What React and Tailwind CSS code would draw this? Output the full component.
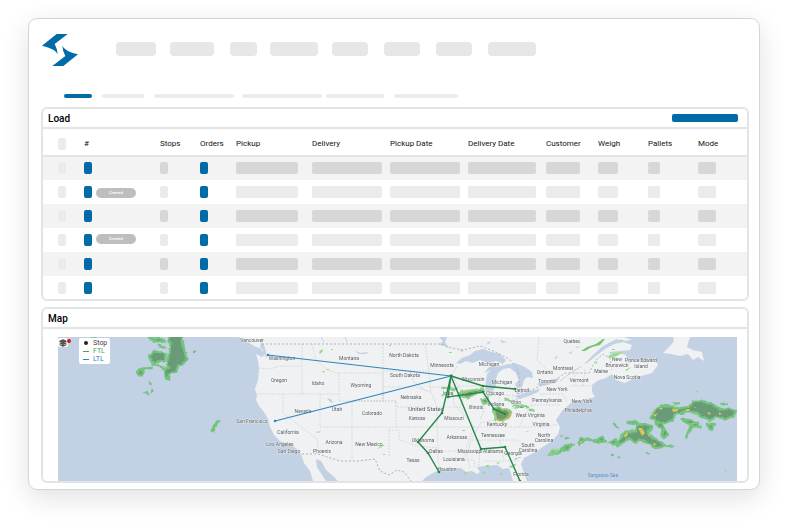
import { Layers } from 'lucide-react';

const NAV_ITEMS = ['w-10', 'w-11 ml-3.5', 'w-[27px] ml-4', 'w-12 ml-[13px]', 'w-9 ml-3.5', 'w-9 ml-4', 'w-9 ml-4', 'w-12 ml-4'];

const TABS = [
  'w-7 bg-[#006ba6]',
  'w-[42px] ml-2.5 bg-[#ebebeb]',
  'w-20 ml-2.5 bg-[#ebebeb]',
  'w-20 ml-2 bg-[#ebebeb]',
  'w-[58px] ml-1 bg-[#ebebeb]',
  'w-16 ml-2.5 bg-[#ebebeb]',
];

const COLUMNS = [
  { label: 'Stops', col: 'w-10', bar: 'w-2' },
  { label: 'Orders', col: 'w-9', bar: 'w-2', blue: true },
  { label: 'Pickup', col: 'w-[76px]', bar: 'w-[62px]' },
  { label: 'Delivery', col: 'w-[78px]', bar: 'w-[70px]' },
  { label: 'Pickup Date', col: 'w-[78px]', bar: 'w-[70px]' },
  { label: 'Delivery Date', col: 'w-[78px]', bar: 'w-[68px]' },
  { label: 'Customer', col: 'w-[52px]', bar: 'w-[34px]' },
  { label: 'Weigh', col: 'w-[50px]', bar: 'w-5' },
  { label: 'Pallets', col: 'w-[50px]', bar: 'w-3' },
  { label: 'Mode', col: '', bar: 'w-[18px]' },
];

const ROWS = [
  { id: 1 },
  { id: 2, status: 'Created', align: 'items-end' },
  { id: 3 },
  { id: 4, status: 'Created', align: 'items-start' },
  { id: 5 },
  { id: 6 },
];

const PLACES = [
  ['Vancouver', 252, 340], ['Washington', 282, 358], ['Montana', 349, 358], ['Oregon', 279, 380],
  ['Idaho', 318, 383], ['Wyoming', 361, 385], ['Nevada', 303, 411], ['Utah', 337, 409],
  ['Colorado', 372, 413], ['San Francisco', 252, 421], ['California', 288, 432], ['Arizona', 334, 442],
  ['Los Angeles', 280, 444], ['San Diego', 289, 451], ['Phoenix', 322, 451], ['New Mexico', 369, 444],
  ['North Dakota', 404, 355], ['Minnesota', 442, 365], ['Michigan', 489, 364], ['Michigan', 502, 382],
  ['South Dakota', 405, 375], ['Wisconsin', 473, 379], ['Iowa', 448, 393], ['Nebraska', 411, 397],
  ['Chicago', 495, 393], ['Detroit', 522, 390], ['Ontario', 545, 372], ['Toronto', 547, 381],
  ['Illinois', 476, 407], ['Indiana', 496, 404], ['Ohio', 516, 402], ['Pennsylvania', 547, 400],
  ['West Virginia', 530, 415], ['Kansas', 417, 418], ['Missouri', 454, 418], ['Kentucky', 497, 424],
  ['Virginia', 541, 424], ['Oklahoma', 423, 440], ['Arkansas', 457, 437], ['Tennessee', 493, 435],
  ['North', 544, 435], ['Carolina', 544, 440], ['South', 528, 445], ['Carolina', 528, 450],
  ['Mississippi', 470, 451], ['Alabama', 493, 451], ['Georgia', 513, 453], ['Dallas', 436, 451],
  ['Texas', 413, 460], ['Louisiana', 454, 459], ['Houston', 447, 469], ['Florida', 521, 474],
  ['Quebec', 572, 341], ['Montreal', 563, 368], ['New', 617, 359], ['Brunswick', 617, 365],
  ['Prince Edward', 641, 360], ['Island', 641, 366], ['Maine', 601, 371], ['Vermont', 579, 380],
  ['Nova Scotia', 627, 377], ['New York', 557, 389], ['New York', 582, 401], ['Philadelphia', 578, 410],
];

const FTL_ROUTES = [
  [[451, 376], [483, 386], [515, 389]],
  [[451, 376], [448, 397], [483, 392], [494, 409], [505, 414]],
  [[451, 376], [442, 413], [418, 442], [428, 453], [439, 472]],
  [[451, 376], [481, 449], [505, 447], [520, 481]],
];

const LTL_ROUTES = [
  [[268, 355], [451, 376]],
  [[275, 421], [451, 376]],
];

function Logo() {
  return (
    <svg viewBox="0 0 108 96" className="w-9 h-8 shrink-0" fill="#006ba6" role="img" aria-label="Logo">
      <path d="M44 0H77L38 30Q46 44 47 61Q41 45 0 35Z" />
      <path d="M64 96H31L70 66Q62 52 61 35Q67 51 108 61Z" />
    </svg>
  );
}

function Panel({ title, action, children }) {
  return (
    <section className="border-2 border-[#e3e4e5] rounded-md overflow-hidden">
      <div className="flex items-center justify-between h-5 pl-[5px] pr-[9px] border-b-2 border-[#e3e4e5]">
        <h2 className="text-[10px] leading-4 pt-px font-medium text-black">{title}</h2>
        {action}
      </div>
      {children}
    </section>
  );
}

function LoadTable() {
  return (
    <table className="w-full table-fixed border-separate border-spacing-0 text-left text-[8px] leading-3">
      <thead>
        <tr className="h-7 *:p-0 *:pt-[3px] *:border-b-2 *:border-[#e3e4e5] *:font-normal *:text-[#111]">
          <th className="w-[41px]">
            <input type="checkbox" aria-label="Select all" className="block appearance-none w-2 h-3 ml-[15px] rounded-[2px] bg-[#ebebeb]" />
          </th>
          <th className="w-[76px]">#</th>
          {COLUMNS.map((c) => (
            <th key={c.label} className={c.col}>{c.label}</th>
          ))}
        </tr>
      </thead>
      <tbody>
        {ROWS.map((row) => (
          <tr
            key={row.id}
            className="group h-6 first:h-[23px] last:h-[23px] odd:bg-[#f3f3f3] *:p-0 *:pb-1.5 last:*:pb-[5px] *:align-bottom"
          >
            <td>
              <input type="checkbox" aria-label={`Select load ${row.id}`} className="block appearance-none w-2 h-3 ml-[15px] rounded-[2px] bg-[#ebebeb]" />
            </td>
            <td>
              <div className={`flex h-3 gap-1 ${row.align || ''}`}>
                <span className="w-2 h-3 rounded-[2px] bg-[#006ba6]" />
                {row.status && (
                  <span className="w-10 h-2.5 rounded-full bg-[#bfbdbe] text-white text-center text-[4px] leading-[10px] font-medium">
                    {row.status}
                  </span>
                )}
              </div>
            </td>
            {COLUMNS.map((c) => (
              <td key={c.label}>
                <div className={`h-3 rounded-[2px] ${c.bar} ${c.blue ? 'bg-[#006ba6]' : 'bg-[#ebebeb] group-odd:bg-[#d7d7d7]'}`} />
              </td>
            ))}
          </tr>
        ))}
      </tbody>
    </table>
  );
}

function Route({ points, color, width }) {
  return (
    <g fill={color} stroke={color}>
      <polyline points={points.map((p) => p.join(',')).join(' ')} fill="none" strokeWidth={width} />
      {points.map(([x, y]) => (
        <circle key={`${x}-${y}`} cx={x} cy={y} r="1.3" stroke="none" />
      ))}
    </g>
  );
}

function Land() {
  return (
    <>
      <g fill="#f0f1f2">
        <path d="M239 337L246 341L254 346L262 350L265 354L262 357L256 354L258 361L259 369L258 380L255 389L257 396L256 400L259 406L264 412L268 419L270 427L274 435L280 441L291 445L297 449L301 454L304 463L310 471L313 481H326L322 475L317 467L316 459L321 461L326 470L333 476L338 481H422L426 477L433 473L441 469L451 468L461 468L466 472L472 471L477 474L480 472L477 467L485 466L497 465L503 469L509 468L511 474L513 481H527L524 473L521 464L524 458L537 451L544 446L551 442L558 434L560 427L556 420L562 411L571 403L582 400L595 397L592 392L592 385L599 380L606 378L612 374L616 380L625 383L634 378L652 373L658 365L655 359L646 363L636 361L629 363L626 355L618 353L611 355L609 352L621 351L630 350L632 345L623 342L614 344L605 349L597 355L587 363L584 364L593 355L603 346L615 340L619 337Z" />
        <path d="M663 353L670 346L674 341L673 337H690L687 347L693 350L702 352L704 361L698 357L693 360L688 354L680 356L671 354Z" />
        <path d="M612 338l12-1 8 3-9 1Z" />
      </g>
      <g fill="#c2d1e3">
        <path d="M261 342L264 345L266 352L267 358L265 356L263 350L260 347Z" />
        <path d="M456 363L462 358L470 355L475 351L483 349L492 352L500 354L506 360L503 364L496 361L488 363L480 360L473 363L466 361L460 364Z" />
        <path d="M485 390L486 381L487 374L491 370L484 373L489 367L501 366L508 364L514 367L503 369L498 373L496 379L496 386L493 391L488 393Z" />
        <path d="M507 365L515 363L525 367L532 372L533 378L527 377L524 380L522 387L517 388L515 384L519 380L516 373L511 369Z" />
        <path d="M514 396L522 394L530 391L540 389L538 392L529 396L520 399Z" />
        <path d="M537 384L544 381L552 380L559 378L557 382L548 385L540 386Z" />
        <path d="M327 398l4 1 2 4-3-1Z M439 337l4 4-4 4 6 1 4 3-4-7 2-5Z M355 351l6 2 8-1-3 2h-7Z M460 349l4 2-3 1Z M315 432l6-1-2 2Z M554 358l4-3-2 4Z M575 347l4-1-1 2Z M500 340l7 2-5 1Z M486 343l5-2-2 3Z M568 353l5-2-2 3Z" />
      </g>
      <g fill="none" stroke="#c2d1e3" strokeWidth="1">
        <path d="M252 347l9 2M321 337l3 5M345 337l2 5M520 388l4 3-6 3M557 418l3 6M560 381l12-9 10-6M520 398l-5 2" />
        <path d="M410 372l4 10 14 10M448 380l5 12 1 12 10 12M480 424l-9 16-4 15 3 14" strokeWidth="0.5" />
      </g>
      <g fill="none" stroke="#cfd1d5" strokeWidth="0.7" strokeDasharray="2 1">
        <path d="M259 368L270 369L280 366L302 366V394M302 344V366M257 394H339V373H383V401H339V394M283 394V413L318 440L317 454M320 394V427H396V401H352V461M383 344V401M383 371H429M383 387H416L431 392M383 391V401H396V407H433M352 401H383M396 427H436M389 430V457M389 430H399V440L418 446L438 448M312 344L316 360L326 369L339 374" />
        <path d="M425 344L429 371L431 392L437 407V427L438 448V462L440 468M429 387H459M457 366L452 376L460 388L464 398L460 407H436M460 407L468 420L474 427H437M436 451H462M474 427L466 448L463 460H474L475 468M459 386H485M484 393V410L480 420M499 394V412M494 395H513M480 423L498 419L512 413M474 427H546L558 424M472 440H517M480 440L479 466M500 440L504 460M484 461H504L520 461M517 440L530 451M513 395V409M532 395V405H561M532 405L524 416L519 428M540 394H563L567 402M575 369V386M585 369L583 386M570 386H592M539 337L537 360L551 374" />
      </g>
      <g fill="none" stroke="#aeb2b7" strokeWidth="1" strokeDasharray="2 2">
        <path d="M262 344H441L452 348L463 350L480 346L496 352L509 359L518 370L520 388L516 394L530 391L544 384L557 379L565 373H589L596 360L603 354L610 358L612 370" />
        <path d="M302 454L318 454L340 461H358L375 459L380 471L389 475L397 470L404 472L411 481" />
      </g>
    </>
  );
}

function Radar() {
  return (
    <>
      <filter id="ragged" x="-5%" y="-5%" width="110%" height="110%">
        <feTurbulence type="fractalNoise" baseFrequency="0.14" numOctaves="2" seed="4" result="noise" />
        <feDisplacementMap in="SourceGraphic" in2="noise" scale="4" xChannelSelector="R" yChannelSelector="G" />
      </filter>
      <g filter="url(#ragged)" strokeLinejoin="round" strokeLinecap="round">
        {/* Pacific */}
        <g transform="translate(55 334) scale(.3333)" fill="#679b76" stroke="#74c47e" strokeWidth="7">
          <path d="M340 0H380L384 26L388 50L394 72L386 88L370 94L364 112L344 120L342 134L332 130L330 108L340 98L338 78L344 50L346 30Z" />
          <path d="M282 66L298 52L312 54L332 60L330 78L312 80L300 88L288 82Z" />
          <path d="M278 6L296 14L316 12L330 22L310 24L294 18Z M292 92L314 98L328 104M246 114L256 106L266 112L262 124L252 124Z M262 104L290 102M312 36L330 40" />
          <path d="M268 177L280 180M292 170v4M287 146v4M420 50v4M110 8h12" />
          <path d="M470 290L476 276L493 260L484 276L474 292Z" />
        </g>
        {/* Atlantic */}
        <g transform="translate(530 330) scale(.3333)" fill="#679b76" stroke="#74c47e" strokeWidth="7">
          <path d="M362 264L372 242L398 228L430 230L445 236L480 230L490 216L520 214L545 224L575 238L600 236L618 246L608 260L585 268L560 262L540 270L515 260L500 248L470 246L440 250L425 272L400 282L378 274Z" />
          <path d="M262 346L270 322L290 304L318 304L322 284L345 282L364 288L354 310L372 328L395 336L404 350L376 354L350 340L330 328L318 338L300 326L284 336Z" />
          <path d="M292 278L310 272L326 278L312 282Z M376 280H398L404 300L414 314L402 322L394 312L398 300Z M56 374L72 364L86 366L110 346L132 342L118 354L85 370Z M146 338L154 324L164 330L150 346Z M166 328L184 330M190 332L215 322L228 334L208 336Z M238 338L254 328L262 338L248 344Z" />
          <path d="M455 270L476 270L504 278L504 288L488 290L474 310L468 324L478 296L484 286L466 276Z M534 280L552 282L546 300L538 296Z" />
          <path d="M512 290v6M400 350L428 346M252 278L262 292M246 375h2M266 382h1M354 370h3M574 222h14M434 220h10M94 316v1M108 326l8-3" />
        </g>
        {/* Great Lakes and Midwest */}
        <g transform="translate(380 330) scale(.3333)" fill="#719c68" stroke="#8bcf8d" strokeWidth="7">
          <path d="M238 198L246 186L270 182L306 176L312 184L290 190L262 202Z" />
          <path d="M304 208L320 204L324 218L310 222Z M344 256L342 238L354 226L364 234L382 242L394 246L386 262L370 272L350 270Z" />
          <path d="M406 236L426 226L444 232M376 206L392 214M400 226h14M450 240h8M188 196L210 190M190 174L230 178M508 374L518 362L534 362L518 374Z" />
          <path d="M390 410L406 404M400 388L420 384M320 200L336 198" strokeWidth="4" />
        </g>
      </g>
      <g fill="#8fe07f">
        <path d="M319 352l3-3 1 2-3 3ZM322 371l3 0-1 2ZM327 369h2v1h-2ZM377 449l5-4 3 0-5 3ZM383 454h2v1h-2ZM389 345h2v1h-2ZM331 349h2v1h-2ZM608 356l8-3 7-1-6 4-8 2ZM595 363l2-2v3ZM625 370l6-3-4 4ZM464 473l3-1-1 3ZM482 473l3-2v3ZM496 463l5-1-3 2ZM500 473h2v2h-2ZM486 465h3v2h-3ZM462 430h3v1h-3ZM486 435h4v1h-4ZM525 432l6-2-4 2ZM449 352h3v1h-3ZM612 349h3v1h-3ZM620 340h3v1h-3ZM532 409l3 1-1 3ZM651 358h1v1h-1ZM696 391h2v1h-2ZM723 469l4 2-1 1Z" />
        <path d="M581 351l6-4 9-3 7-5 2 0-5 6-8 2-7 4Z" fill="#6fc76c" />
      </g>
      <g fill="#d9c45a">
        <path d="M653 415l5-2-3 4ZM659 408l4 0-2 2ZM672 409l6 0 0 2-5 1ZM686 409l4 0-1 2-3 0ZM707 412l4 1-2 2ZM719 412l3 2-3 1ZM624 435l3-3 1 3-3 3ZM638 428l4 0 3 5-3 3-2-4ZM653 443l4 1-3 2ZM636 442l3-1-1 2ZM580 441l2 0-1 3ZM692 423l3 0-2 2ZM648 434l2 1-1 2ZM694 407l2 0-1 1Z" />
        <path d="M463 393l5-1-3 2ZM497 419l5 1 3-2-3 3-5 0ZM508 415l3-3-1 5-4 3ZM502 409l3 0-2 2Z" fill="#d9a94c" />
      </g>
    </>
  );
}

function ShipmentMap() {
  return (
    <div className="relative ml-[15px] mr-2.5 mt-2">
      <svg viewBox="58 337 679 144" className="block w-full h-auto bg-[#c2d1e3]" role="img" aria-label="Shipment map">
        <Land />
        <Radar />
        <g className="text-[5px]" fill="#5a5d62" stroke="#f3f4f5" strokeWidth="0.6" paintOrder="stroke" textAnchor="middle">
          {PLACES.map(([name, x, y]) => (
            <text key={`${name}-${x}-${y}`} x={x} y={y + 2}>{name}</text>
          ))}
          <text x="426" y="411" className="text-[6px]">United States</text>
        </g>
        <text x="603" y="477" textAnchor="middle" fill="#5a93c9" className="text-[5px]">Sargasso Sea</text>
        {LTL_ROUTES.map((points, i) => <Route key={i} points={points} color="#2e86b9" width={1.2} />)}
        {FTL_ROUTES.map((points, i) => <Route key={i} points={points} color="#27864a" width={1.4} />)}
      </svg>

      <button type="button" aria-label="Map layers" className="absolute left-0 top-px w-2.5 h-[9px] bg-white rounded-[2px] flex items-center justify-center">
        <Layers className="w-2 h-2 text-[#333] fill-[#555]" strokeWidth={2} />
        <span className="absolute -right-[3px] top-px w-1 h-1 rounded-full bg-[#d0161b]" />
      </button>

      <ul className="absolute left-[21px] top-px w-[31px] h-[26px] pt-px pl-1 bg-white rounded-[2px] text-[7px] leading-[8px] text-[#444]">
        <li className="flex items-center gap-1">
          <span className="w-1.5 flex justify-center"><span className="w-1 h-1 rounded-full bg-[#222]" /></span>
          Stop
        </li>
        <li className="flex items-center gap-1 text-[#4f9d69]">
          <span className="w-1.5 h-px bg-[#4f9d69]" />
          FTL
        </li>
        <li className="flex items-center gap-1 text-[#2e86b9]">
          <span className="w-1.5 h-px bg-[#2e86b9]" />
          LTL
        </li>
      </ul>
    </div>
  );
}

export default function App() {
  return (
    <div className="min-h-screen bg-white pt-[18px] pb-9 pl-7 pr-[27px] font-['Roboto',sans-serif]">
      <main className="bg-white border border-[#d5d5d5] rounded-[9px] pl-3 pr-2.5 pb-1.5 shadow-[0_8px_28px_rgba(0,0,0,0.12)]">
        <header className="flex items-center pt-[15px] pl-px">
          <Logo />
          <div className="flex items-center ml-[38px] mb-0.5">
            {NAV_ITEMS.map((item, i) => (
              <span key={i} className={`h-3.5 rounded-[4px] bg-[#e7e7e7] ${item}`} />
            ))}
          </div>
        </header>

        <div className="flex mt-7 pl-[23px] pb-[9px]">
          {TABS.map((tab, i) => (
            <span key={i} className={`h-1 rounded-full ${tab}`} />
          ))}
        </div>

        <div className="flex flex-col gap-1.5">
          <Panel
            title="Load"
            action={<button type="button" aria-label="New load" className="w-[66px] h-2 rounded-[2px] bg-[#006ba6]" />}
          >
            <LoadTable />
          </Panel>
          <Panel title="Map">
            <ShipmentMap />
          </Panel>
        </div>
      </main>
    </div>
  );
}
